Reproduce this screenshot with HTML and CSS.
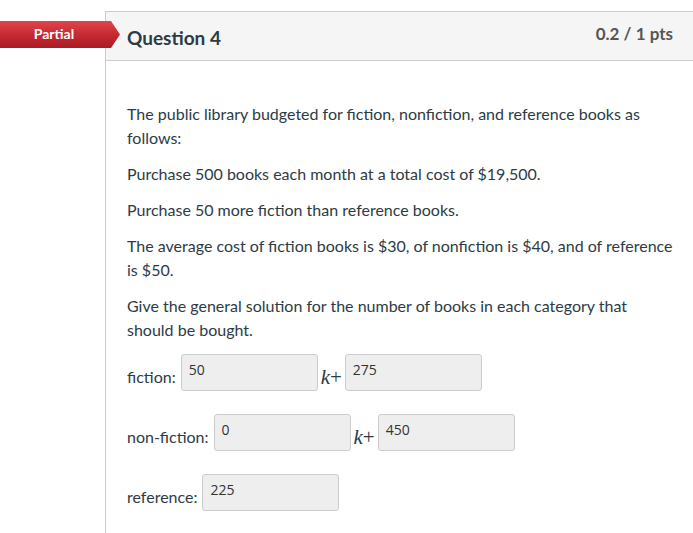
FILE: index.html
```html
<!DOCTYPE html>
<html lang="en">
<head>
<meta charset="utf-8"/>
<meta content="width=device-width, initial-scale=1.0" name="viewport"/>
<title>Question 4</title>
<link rel="stylesheet" href="styles.css">
</head>
<body>
<div class="page">
    <div class="badge">Partial</div>

    <div class="question">
        <div class="question-header">
            <span class="question-name">Question 4</span>
            <span class="question-points">0.2 / 1 pts</span>
        </div>

        <div class="question-body">
            <p>The public library budgeted for fiction, nonfiction, and reference books as follows:</p>
            <p>Purchase 500 books each month at a total cost of $19,500.</p>
            <p>Purchase 50 more fiction than reference books.</p>
            <p>The average cost of fiction books is $30, of nonfiction is $40, and of reference is $50.</p>
            <p>Give the general solution for the number of books in each category that should be bought.</p>

            <div class="answer-row">
                <span class="answer-label">fiction:</span>
                <div class="answer-box">50</div>
                <span class="math"><i>k</i>+</span>
                <div class="answer-box">275</div>
            </div>

            <div class="answer-row">
                <span class="answer-label">non-fiction:</span>
                <div class="answer-box">0</div>
                <span class="math"><i>k</i>+</span>
                <div class="answer-box">450</div>
            </div>

            <div class="answer-row">
                <span class="answer-label">reference:</span>
                <div class="answer-box">225</div>
            </div>
        </div>
    </div>
</div>
</body>
</html>
```

FILE: styles.css
```css
html, body {
    margin: 0;
    height: 100%;
    overflow: hidden;
}
body {
    font-family: Lato, "Open Sans", sans-serif;
    color: #2d3b45;
    background: #fff;
}
.page {
    position: relative;
    padding: 11px 0 0 105px;
    height: 100%;
    box-sizing: border-box;
}

/* Partial ribbon sits over the box border */
.badge {
    position: absolute;
    left: 0;
    top: 21px;
    width: 120px;
    height: 27px;
    box-sizing: border-box;
    padding: 0 12px 2px 0;
    background: linear-gradient(#e0454b, #c1262e 60%, #a81c24);
    clip-path: polygon(0 0, 111px 0, 120px 50%, 111px 100%, 0 100%);
    color: #fff;
    font-weight: bold;
    font-size: 14px;
    display: flex;
    align-items: center;
    justify-content: center;
}

.question {
    border-left: 1px solid #c7cdd1;
    border-top: 1px solid #c7cdd1;
    height: 100%;
}
.question-header {
    background: #f5f5f5;
    border-bottom: 1px solid #c7cdd1;
    height: 49px;
    box-sizing: border-box;
    padding: 0 20px 0 21px;
    display: flex;
    justify-content: space-between;
    align-items: center;
}
.question-name {
    font-size: 19px;
    font-weight: bold;
    margin-top: 3px;
}
.question-points {
    font-size: 17px;
    font-weight: bold;
    color: #555;
    margin-top: -5px;
}

.question-body {
    padding: 41px 20px 0 21px;
    font-size: 16px;
    line-height: 24px;
}
.question-body p {
    margin: 0 0 12px 0;
}

.answer-row {
    display: flex;
    align-items: center;
    margin-bottom: 23px;
}
.answer-row:first-of-type {
    margin-top: 2px;
}
.answer-label {
    padding-top: 9px;
    margin-right: 5px;
}
.answer-box {
    width: 137px;
    height: 37px;
    box-sizing: border-box;
    background: #eeeeee;
    border: 1px solid #cccccc;
    border-radius: 3px;
    padding: 5px 7px;
    font-family: "Open Sans", sans-serif;
    font-size: 14px;
    line-height: 20px;
    color: #333;
}
.math {
    font-family: "Liberation Serif", serif;
    font-size: 21px;
    padding: 8px 3px 0 3px;
}
```
